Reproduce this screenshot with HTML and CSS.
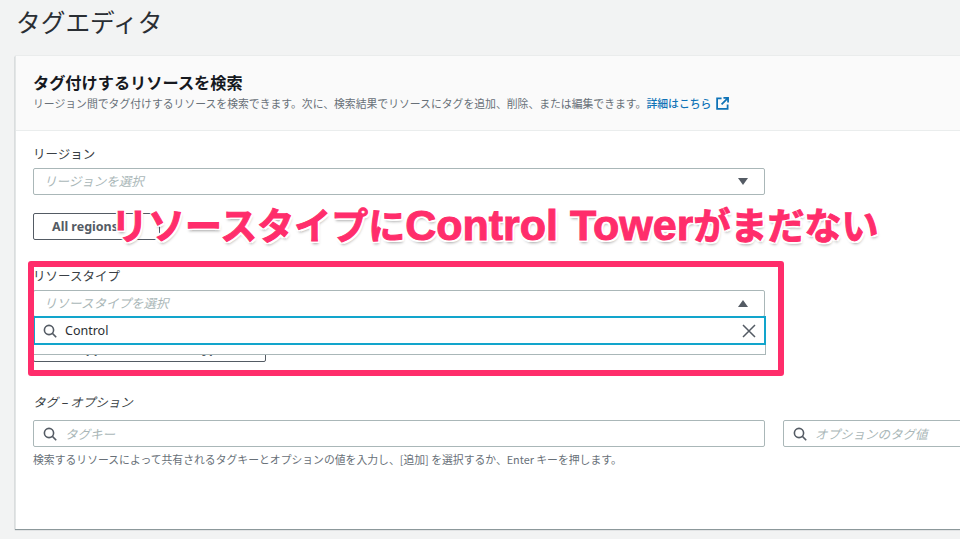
FILE: index.html
```html
<!DOCTYPE html>
<html lang="ja">
<head>
<meta charset="utf-8">
<title>タグエディタ</title>
<link rel="stylesheet" href="styles.css">
</head>
<body>
<div class="page">
  <h1 class="title">タグエディタ</h1>
  <section class="card">
    <header class="card-head">
      <h2 class="card-title">タグ付けするリソースを検索</h2>
      <p class="card-desc">リージョン間でタグ付けするリソースを検索できます。次に、検索結果でリソースにタグを追加、削除、または編集できます。<a class="link">詳細はこちら<svg class="ext" width="13" height="13" viewBox="0 0 14 14" fill="none" stroke="#0f73b7" stroke-width="1.9"><path d="M6 1.5H1.2v11.3h11.3V8"/><path d="M8 1h5v5M13 1L6 8"/></svg></a></p>
    </header>
    <div class="card-body">
      <div class="field field-region">
        <label class="label">リージョン</label>
        <div class="select"><span class="placeholder">リージョンを選択</span><span class="caret down"></span></div>
        <button class="btn btn-region">All regions</button>
      </div>
      <div class="field field-type">
        <label class="label">リソースタイプ</label>
        <div class="select-wrap">
          <div class="select"><span class="placeholder">リソースタイプを選択</span><span class="caret up"></span></div>
          <button class="btn btn-type">All supported resource types</button>
          <div class="dropdown">
            <div class="search">
              <svg class="icon" width="14" height="14" viewBox="0 0 14 14" fill="none" stroke="#545b64" stroke-width="1.6"><circle cx="6" cy="6" r="4.6"/><path d="M9.4 9.4l3.8 3.8"/></svg>
              <span class="search-text">Control</span>
              <svg class="clear" width="14" height="14" viewBox="0 0 14 14" fill="none" stroke="#545b64" stroke-width="1.5"><path d="M1 1l12 12M13 1L1 13"/></svg>
            </div>
          </div>
        </div>
      </div>
      <div class="field field-tag">
        <label class="label label-italic">タグ – オプション</label>
        <div class="tag-row">
          <div class="input input-key">
            <svg class="icon" width="14" height="14" viewBox="0 0 14 14" fill="none" stroke="#545b64" stroke-width="1.6"><circle cx="6" cy="6" r="4.6"/><path d="M9.4 9.4l3.8 3.8"/></svg>
            <span class="placeholder">タグキー</span>
          </div>
          <div class="input input-val">
            <svg class="icon" width="14" height="14" viewBox="0 0 14 14" fill="none" stroke="#545b64" stroke-width="1.6"><circle cx="6" cy="6" r="4.6"/><path d="M9.4 9.4l3.8 3.8"/></svg>
            <span class="placeholder">オプションのタグ値</span>
          </div>
        </div>
        <p class="hint">検索するリソースによって共有されるタグキーとオプションの値を入力し、[追加] を選択するか、Enter キーを押します。</p>
      </div>
    </div>
  </section>
  <div class="highlight"></div>
  <div class="annotation">リソースタイプに<span class="annotation-latin">Control Tower</span>がまだない</div>
</div>
</body>
</html>
```
FILE: styles.css
```css
* { box-sizing: border-box; }
html, body { margin: 0; height: 100%; overflow: hidden; }
body {
  background: #f2f3f3;
  color: #16191f;
  font-family: "Noto Sans", "Noto Sans CJK JP", sans-serif;
}
.page { position: relative; width: 960px; height: 539px; overflow: hidden; }
.title {
  margin: 0;
  height: 56px;
  padding: 3px 0 0 16px;
  font: 400 24.7px/36px "Noto Sans CJK JP", sans-serif;
  color: #2a2e33;
}
.card {
  margin-left: 15px;
  width: 1100px;
  height: 473px;
  background: #fff;
  border-left: 1px solid #e3e6e6;
  box-shadow: 0 1px 1px 0 rgba(0, 28, 36, .4), 0 0 1px 0 rgba(0, 28, 36, .2);
}
.card-head {
  height: 75px;
  padding: 15px 17px 0;
  background: #fafafa;
  border-bottom: 1px solid #eaeded;
}
.card-title {
  margin: 0;
  font: 700 16.2px/22px "Noto Sans CJK JP", sans-serif;
  color: #16191f;
}
.card-desc {
  margin: 1px 0 0;
  font: 400 10.83px/19px "Noto Sans CJK JP", sans-serif;
  color: #687078;
  white-space: nowrap;
}
.link { color: #0f73b7; font-weight: 500; }
.ext { margin-left: 5px; vertical-align: -2px; }
.card-body { padding: 12px 17px 0; }
.label {
  display: block;
  height: 25px;
  font: 400 12.5px/22px "Noto Sans CJK JP", sans-serif;
  color: #3a3f45;
}
.label-italic { font-style: italic; height: 31px; line-height: 26px; }
.select {
  display: flex;
  align-items: center;
  justify-content: space-between;
  width: 732px;
  height: 27px;
  padding: 0 16px 0 10px;
  background: #fff;
  border: 1px solid #aab7b8;
  border-radius: 2px;
}
.placeholder {
  font: italic 400 12.5px/16px "Noto Sans CJK JP", sans-serif;
  color: #aab7b8;
  white-space: nowrap;
}
.select .placeholder { padding-bottom: 2px; }
.caret { width: 0; height: 0; border-left: 5px solid transparent; border-right: 5px solid transparent; }
.caret.down { border-top: 7px solid #545b64; }
.caret.up { border-bottom: 7px solid #545b64; }
.btn {
  display: block;
  height: 27px;
  padding: 0 0 0 18px;
  background: #fff;
  border: 1px solid #545b64;
  border-radius: 2px;
  font: 700 12.5px/16px "Noto Sans", sans-serif;
  color: #545b64;
  text-align: left;
  white-space: nowrap;
}
.btn-region { width: 127px; margin-top: 18px; }
.field-type { margin-top: 25px; }
.select-wrap { position: relative; height: 72px; }
.btn-type { width: 233px; margin-top: 18px; }
.dropdown {
  position: absolute;
  left: 0;
  top: 26px;
  width: 733px;
  height: 39px;
  background: #fff;
  border: 1px solid #aab7b8;
  border-top: 0;
}
.search {
  display: flex;
  align-items: center;
  height: 29px;
  padding: 0 8px;
  border: 2px solid #12a5cc;
  margin: 0 -1px;
}
.icon { flex: none; }
.search-text {
  flex: 1;
  margin-left: 8px;
  font: 400 12.5px/16px "Noto Sans", sans-serif;
  color: #2a2e33;
}
.clear { flex: none; }
.field-tag { margin-top: 27px; }
.tag-row { display: flex; gap: 18px; }
.input {
  display: flex;
  align-items: center;
  flex: none;
  gap: 8px;
  height: 27px;
  padding-left: 9px;
  background: #fff;
  border: 1px solid #aab7b8;
  border-radius: 2px;
}
.input-key { width: 732px; }
.input-val { width: 300px; }
.hint {
  margin: 4px 0 0;
  font: 400 10.83px/16px "Noto Sans CJK JP", sans-serif;
  color: #687078;
  white-space: nowrap;
}
.highlight {
  position: absolute;
  left: 28px;
  top: 261px;
  width: 756px;
  height: 115px;
  border: 6px solid #ff2d6b;
  border-radius: 3px;
}
.annotation {
  position: absolute;
  left: 111px;
  top: 198px;
  font: 700 37px/52px "Noto Sans CJK JP", sans-serif;
  color: #ff2d6b;
  white-space: nowrap;
  -webkit-text-stroke: 1px #ff2d6b;
  text-shadow: -2px 0 0 #fff, 2px 0 0 #fff, 0 -2px 0 #fff, 0 2px 0 #fff, 2px 2px 0 #fff, -2px -2px 0 #fff, 2px -2px 0 #fff, -2px 2px 0 #fff, 1px 3px 3px rgba(0, 0, 0, .35);
}
.annotation-latin {
  font: 700 43px/52px "Liberation Sans", sans-serif;
}
```
